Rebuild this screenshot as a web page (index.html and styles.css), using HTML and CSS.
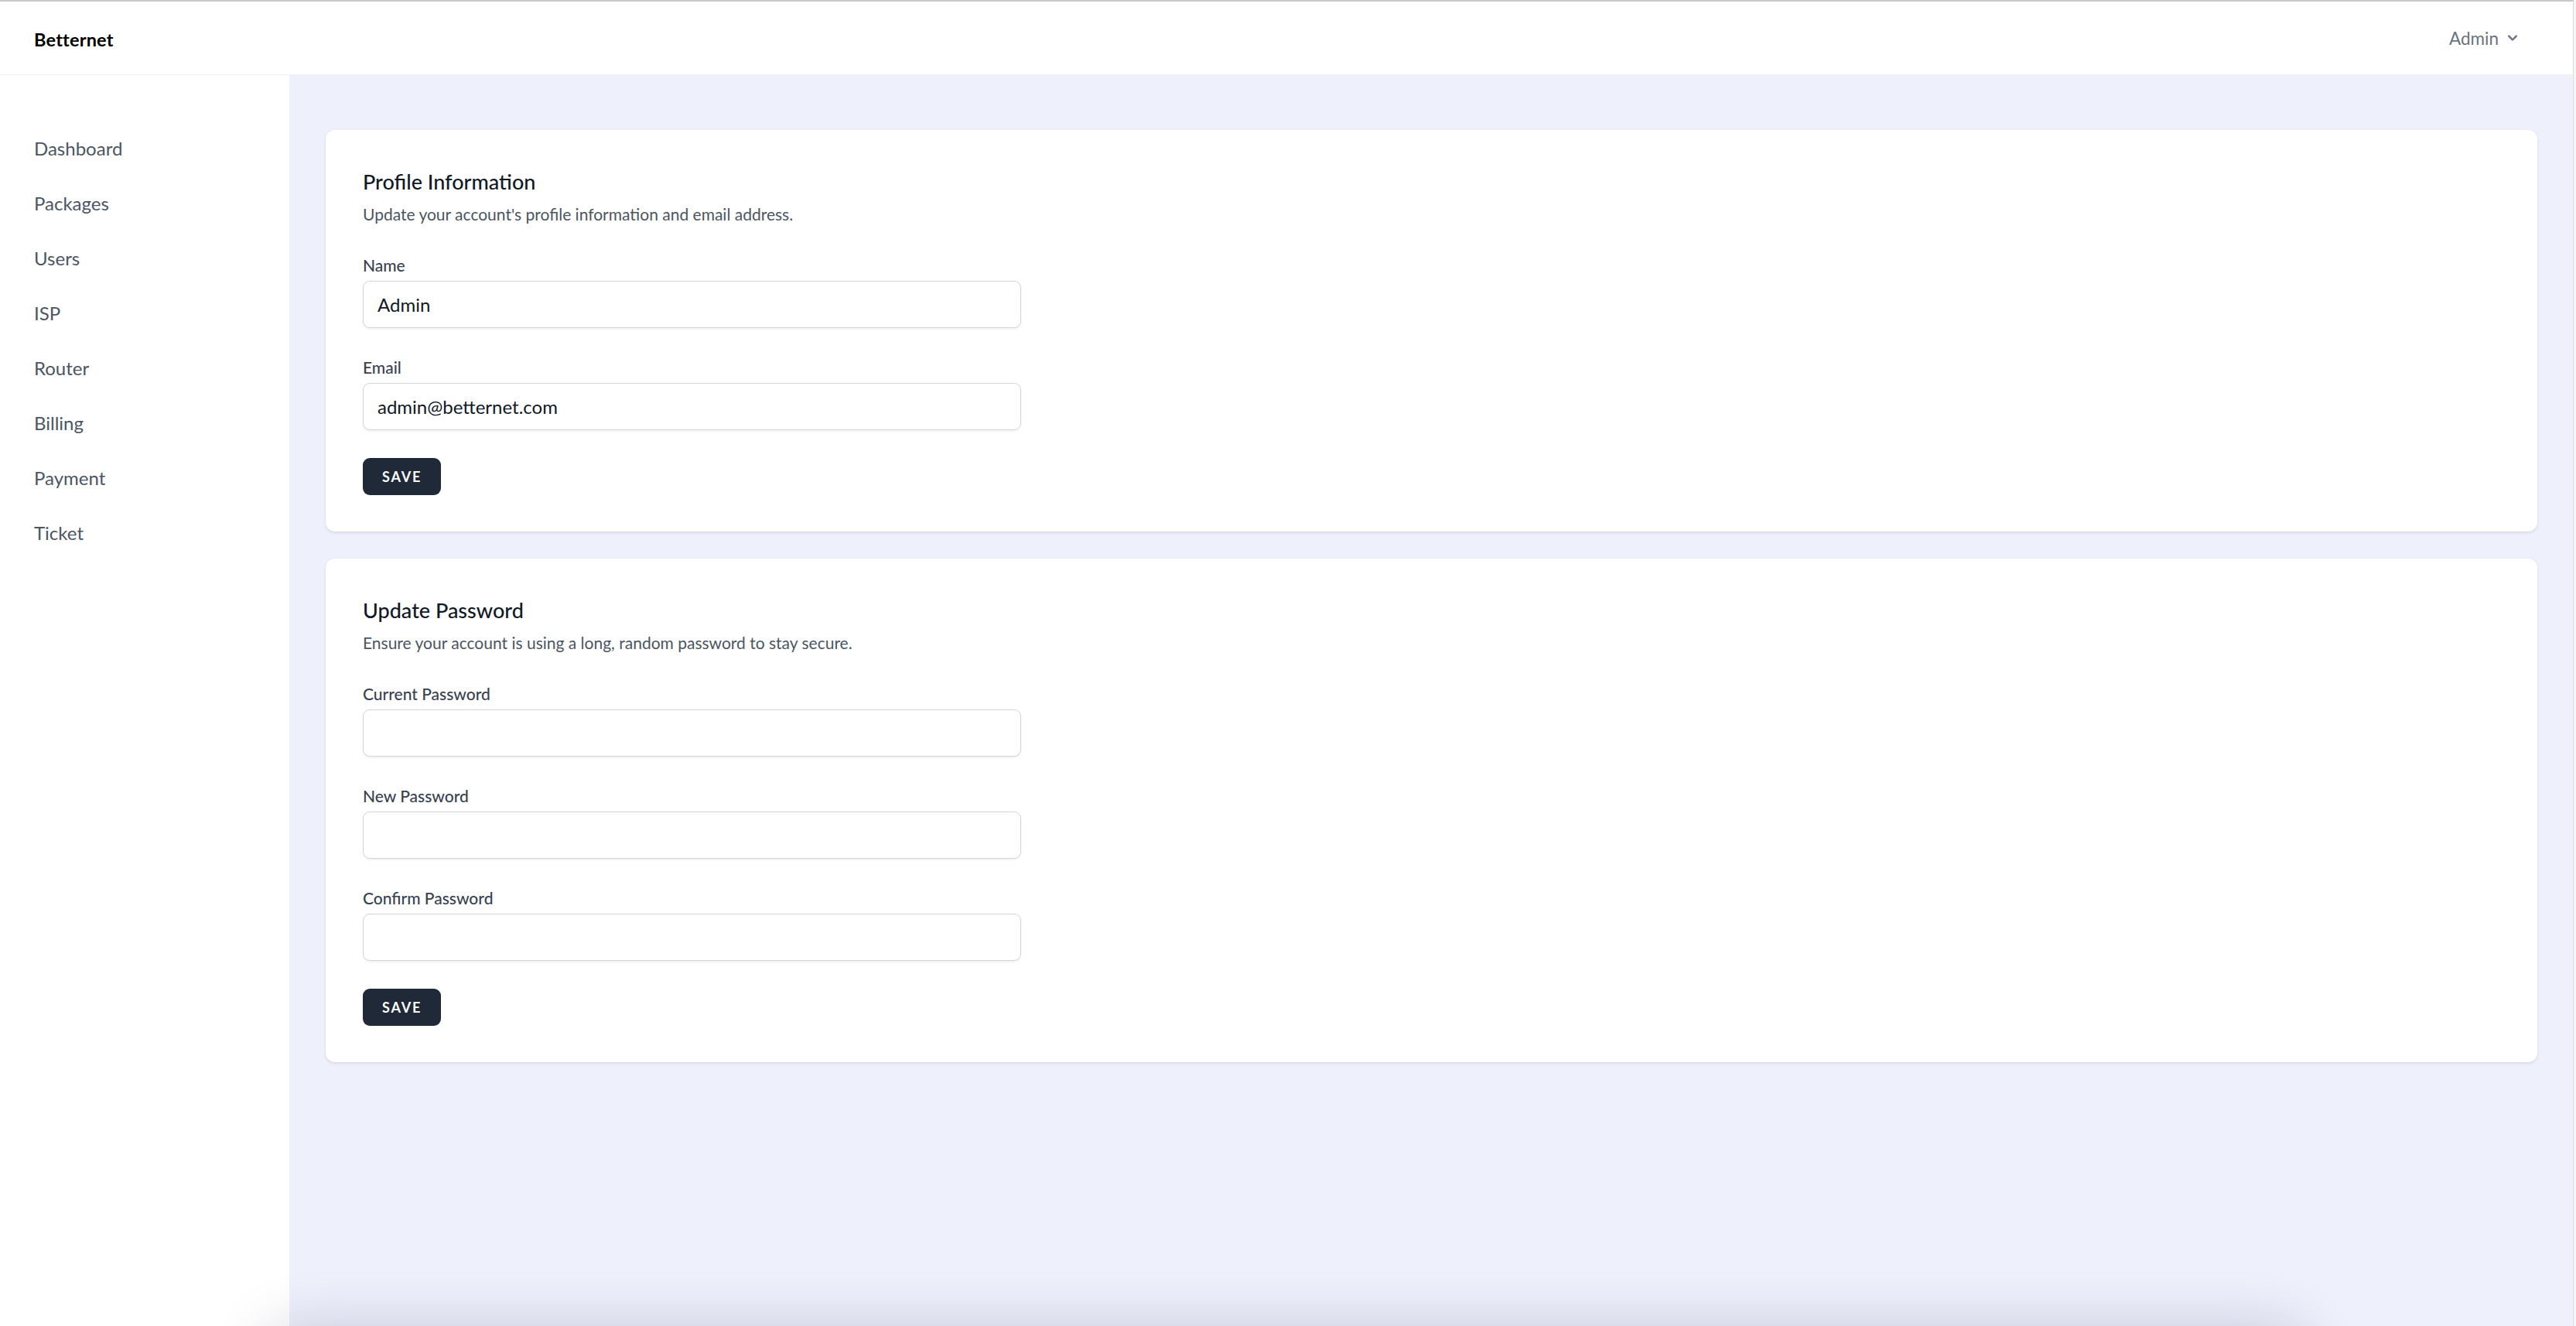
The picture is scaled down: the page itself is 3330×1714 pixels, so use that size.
FILE: index.html
```html
<!DOCTYPE html>
<html lang="en">
<head>
  <meta charset="UTF-8">
  <meta name="viewport" content="width=device-width, initial-scale=1.0">
  <title>Profile – Betternet</title>
  <link rel="stylesheet" href="styles.css">
</head>
<body>
  <div class="app">
    <header class="topbar">
      <div class="brand">Betternet</div>
      <button class="user-menu" type="button">
        <span>Admin</span>
        <svg class="chevron" viewBox="0 0 20 20" aria-hidden="true">
          <path fill="currentColor" fill-rule="evenodd" d="M5.293 7.293a1 1 0 011.414 0L10 10.586l3.293-3.293a1 1 0 111.414 1.414l-4 4a1 1 0 01-1.414 0l-4-4a1 1 0 010-1.414z" clip-rule="evenodd"/>
        </svg>
      </button>
    </header>

    <div class="layout">
      <nav class="sidebar">
        <a href="#">Dashboard</a>
        <a href="#">Packages</a>
        <a href="#">Users</a>
        <a href="#">ISP</a>
        <a href="#">Router</a>
        <a href="#">Billing</a>
        <a href="#">Payment</a>
        <a href="#">Ticket</a>
      </nav>

      <main class="content">
        <!-- dados do perfil -->
        <section class="card">
          <h2>Profile Information</h2>
          <p class="hint">Update your account's profile information and email address.</p>
          <form class="form">
            <div class="field">
              <label for="name">Name</label>
              <input id="name" type="text" value="Admin">
            </div>
            <div class="field">
              <label for="email">Email</label>
              <input id="email" type="email" value="admin@betternet.com">
            </div>
            <div><button class="btn" type="button">Save</button></div>
          </form>
        </section>

        <!-- troca de senha -->
        <section class="card">
          <h2>Update Password</h2>
          <p class="hint">Ensure your account is using a long, random password to stay secure.</p>
          <form class="form">
            <div class="field">
              <label for="current">Current Password</label>
              <input id="current" type="password">
            </div>
            <div class="field">
              <label for="new">New Password</label>
              <input id="new" type="password">
            </div>
            <div class="field">
              <label for="confirm">Confirm Password</label>
              <input id="confirm" type="password">
            </div>
            <div><button class="btn" type="button">Save</button></div>
          </form>
        </section>
      </main>
    </div>
  </div>

  <!-- sombra de algo que fica abaixo da tela -->
  <div class="bottom-sheet"></div>
</body>
</html>
```

FILE: styles.css
```css
html, body {
  margin: 0;
  height: 100%;
}

body {
  background: #f6f6f6;
  font-family: "Lato", "Liberation Sans", sans-serif;
  color: #111827;
  overflow: hidden;
}

.app {
  height: 100vh;
  box-sizing: border-box;
  margin-right: 3px;
  border-top: 2px solid #c9c9c9;
  border-right: 1px solid #dcdcdc;
  background: #fff;
  display: grid;
  grid-template-rows: 95px 1fr;
}

/* barra do topo */
.topbar {
  display: flex;
  align-items: center;
  justify-content: space-between;
  padding: 0 66px 0 44px;
  border-bottom: 1px solid #f0f0f2;
  box-sizing: border-box;
}

.brand {
  font-size: 23.5px;
  font-weight: 700;
  letter-spacing: 0.2px;
  color: #000;
  padding-top: 3px;
}

.user-menu {
  display: flex;
  align-items: center;
  gap: 6px;
  border: none;
  background: none;
  padding: 0;
  font-family: inherit;
  font-size: 22.5px;
  color: #6b7280;
}

.chevron {
  width: 24px;
  height: 24px;
}

.layout {
  display: grid;
  grid-template-columns: 374px 1fr;
  min-height: 0;
}

/* menu lateral */
.sidebar {
  background: #fff;
  padding-top: 60px;
}

.sidebar a {
  display: block;
  padding: 17.45px 44px;
  line-height: 36px;
  font-size: 24px;
  color: #4b5563;
  text-decoration: none;
}

.content {
  background: #eef0fc;
  padding: 71px 46px 0 47px;
  display: flex;
  flex-direction: column;
  gap: 35px;
}

.card {
  background: #fff;
  border-radius: 12px;
  box-shadow: 0 1.5px 4.5px rgba(0, 0, 0, 0.08), 0 1.5px 3px -1.5px rgba(0, 0, 0, 0.08);
  padding: 46px 48px 47px;
}

.card h2 {
  margin: 0;
  font-size: 27px;
  line-height: 42px;
  font-weight: 500;
  color: #111827;
}

.hint {
  margin: 6px 0 0;
  font-size: 21px;
  line-height: 30px;
  color: #4b5563;
}

.form {
  margin-top: 36px;
  display: flex;
  flex-direction: column;
  gap: 36px;
}

.field label {
  display: block;
  font-size: 21px;
  line-height: 30px;
  font-weight: 500;
  color: #374151;
}

.field input {
  display: block;
  box-sizing: border-box;
  width: 851px;
  height: 61px;
  margin-top: 5px;
  padding: 0 18px;
  border: 1.5px solid #d1d5db;
  border-radius: 9px;
  box-shadow: 0 1.5px 3px rgba(0, 0, 0, 0.05);
  font-family: inherit;
  font-size: 24px;
  color: #111827;
  background: #fff;
  outline: none;
}

.btn {
  height: 48px;
  padding: 0 25px;
  border: none;
  border-radius: 9px;
  background: #1f2937;
  color: #fff;
  font-family: inherit;
  font-size: 18px;
  font-weight: 700;
  letter-spacing: 0.1em;
  text-transform: uppercase;
}

.bottom-sheet {
  position: fixed;
  left: 350px;
  width: 2625px;
  bottom: -106px;
  height: 100px;
  border-radius: 24px;
  box-shadow: 0 0 80px rgba(20, 20, 60, 0.2);
}
```
